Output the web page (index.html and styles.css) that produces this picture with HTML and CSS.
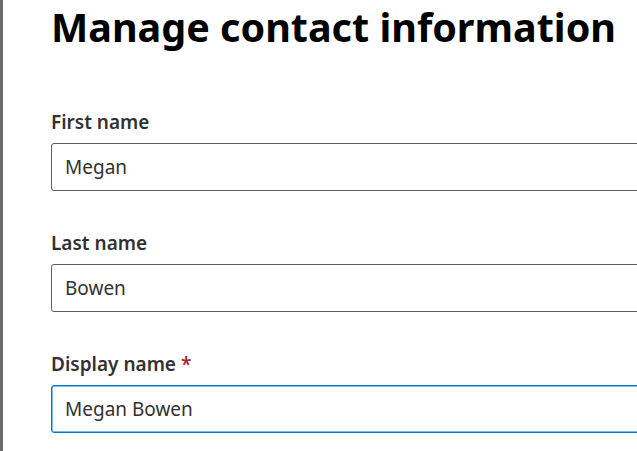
FILE: index.html
```html
<!DOCTYPE html>
<html lang="en">
<head>
<meta charset="utf-8">
<title>Manage contact information</title>
<link rel="stylesheet" href="styles.css">
</head>
<body>
<div class="page">
  <div class="edge"></div>
  <main class="panel">
    <h1 class="title">Manage contact information</h1>
    <form class="form">
      <div class="field">
        <label class="label" for="first">First name</label>
        <input class="input" id="first" type="text" value="Megan">
      </div>
      <div class="field">
        <label class="label" for="last">Last name</label>
        <input class="input" id="last" type="text" value="Bowen">
      </div>
      <div class="field">
        <label class="label" for="display">Display name <span class="req">*</span></label>
        <input class="input input-focus" id="display" type="text" value="Megan Bowen">
      </div>
    </form>
  </main>
</div>
</body>
</html>
```

FILE: styles.css
```css
html, body {
  margin: 0;
  padding: 0;
  background: #ffffff;
  overflow: hidden;
}
.page {
  display: flex;
  width: 637px;
  height: 451px;
  overflow: hidden;
}
.edge {
  flex: 0 0 3px;
  background: #6b6b6b;
}
.panel {
  flex: 1 0 auto;
  padding-left: 48px;
  font-family: "Noto Sans", "Open Sans", sans-serif;
  color: #323130;
}
.title {
  margin: 0;
  font-size: 39.5px;
  line-height: 54px;
  font-weight: 700;
  color: #000000;
  white-space: nowrap;
}
.form {
  display: flex;
  flex-direction: column;
  gap: 39px;
  margin-top: 55px;
}
.field {
  display: flex;
  flex-direction: column;
  gap: 8px;
}
.label {
  font-size: 19px;
  line-height: 26px;
  font-weight: 600;
  color: #323130;
}
.req {
  color: #a4262c;
}
.input {
  box-sizing: border-box;
  width: 700px;
  height: 48px;
  margin: 0;
  padding: 0 13px;
  border: 1px solid #605e5c;
  border-radius: 3px;
  background: #ffffff;
  font-family: "Noto Sans", "Open Sans", sans-serif;
  font-size: 19px;
  color: #323130;
  outline: none;
}
.input-focus {
  border: 1px solid #0078d4;
  box-shadow: inset 0 0 0 0.5px #0078d4;
}
```
